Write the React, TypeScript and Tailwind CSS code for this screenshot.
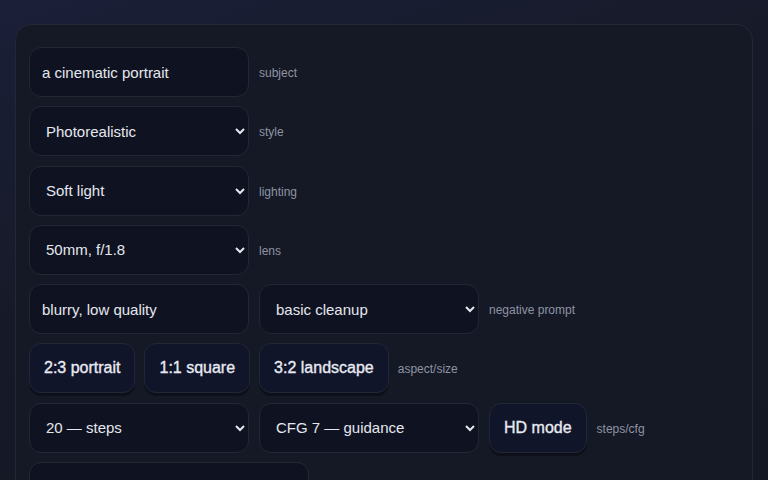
import React from "react";

const field =
  "h-[50px] w-[220px] rounded-xl border border-[#222738] bg-[#0f1321] px-3 text-[15px] text-[#e5e7ef] outline-none";

function Label({ children }: { children: React.ReactNode }) {
  return <span className="pt-[2px] text-xs text-[#8e93a3]">{children}</span>;
}

function Select({ value, options, width = "w-[220px]" }: any) {
  return (
    <select
      defaultValue={value}
      className={`h-[50px] ${width} rounded-xl border border-[#222738] bg-[#0f1321] px-3 text-[15px] text-[#e5e7ef] outline-none [color-scheme:dark]`}
    >
      {options.map((o: string) => (
        <option key={o}>{o}</option>
      ))}
    </select>
  );
}

function Btn({ children }: { children: React.ReactNode }) {
  return (
    <button className="h-[50px] rounded-xl border border-[#222738] bg-[#11152a] px-[14px] text-[16px] font-medium text-[#e8eaf2] shadow-[0_3px_0_rgba(0,0,0,0.35)] [-webkit-text-stroke:0.35px_#e8eaf2]">
      {children}
    </button>
  );
}

export default function App() {
  return (
    <div
      className="min-h-screen bg-[linear-gradient(160deg,#1b1f38_0%,#161a28_40%,#141824_100%)] px-[15px] pt-6"
      style={{ fontFamily: '"Liberation Sans", Arial, sans-serif' }}
    >
      <div className="flex flex-col gap-[9.3px] rounded-2xl border border-[#232838] bg-[#151926] px-[13px] pt-[22px] pb-6">
        <div className="flex items-center gap-[10px]">
          <input className={field} defaultValue="a cinematic portrait" />
          <Label>subject</Label>
        </div>
        <div className="flex items-center gap-[10px]">
          <Select value="Photorealistic" options={["Photorealistic", "Anime", "Oil painting"]} />
          <Label>style</Label>
        </div>
        <div className="flex items-center gap-[10px]">
          <Select value="Soft light" options={["Soft light", "Golden hour", "Studio"]} />
          <Label>lighting</Label>
        </div>
        <div className="flex items-center gap-[10px]">
          <Select value="50mm, f/1.8" options={["50mm, f/1.8", "35mm, f/2", "85mm, f/1.4"]} />
          <Label>lens</Label>
        </div>
        <div className="flex items-center gap-[10px]">
          <input className={field} defaultValue="blurry, low quality" />
          <Select value="basic cleanup" options={["basic cleanup", "strict", "none"]} />
          <Label>negative prompt</Label>
        </div>
        <div className="flex items-center gap-[9px]">
          <Btn>2:3 portrait</Btn>
          <Btn>1:1 square</Btn>
          <Btn>3:2 landscape</Btn>
          <Label>aspect/size</Label>
        </div>
        <div className="flex items-center gap-[10px]">
          <Select value="20 — steps" options={["20 — steps", "30 — steps", "50 — steps"]} />
          <Select value="CFG 7 — guidance" options={["CFG 7 — guidance", "CFG 5 — guidance", "CFG 9 — guidance"]} />
          <Btn>HD mode</Btn>
          <Label>steps/cfg</Label>
        </div>
        <div className="flex items-center gap-[10px]">
          <input className={`${field} w-[280px]`} defaultValue="" />
        </div>
      </div>
    </div>
  );
}
